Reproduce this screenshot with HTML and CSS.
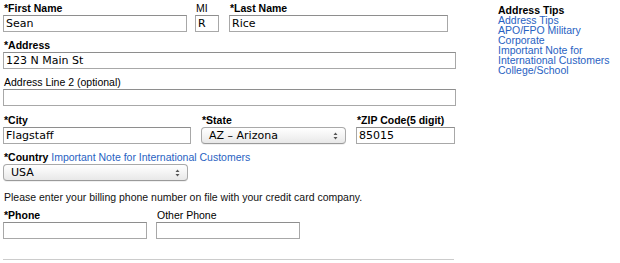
FILE: index.html
```html
<!DOCTYPE html>
<html>
<head>
<meta charset="utf-8">
<link rel="stylesheet" href="styles.css">
</head>
<body>
<div class="page">
  <form class="form">
    <div class="row">
      <div class="field">
        <label class="lbl req">*First Name</label>
        <input class="inp w-first" type="text" value="Sean">
      </div>
      <div class="field gap8">
        <label class="lbl">MI</label>
        <input class="inp w-mi" type="text" value="R">
      </div>
      <div class="field gap10">
        <label class="lbl req">*Last Name</label>
        <input class="inp w-last" type="text" value="Rice">
      </div>
    </div>

    <div class="row">
      <div class="field">
        <label class="lbl req">*Address</label>
        <input class="inp w-full" type="text" value="123 N Main St">
      </div>
    </div>

    <div class="row row-8">
      <div class="field">
        <label class="lbl">Address Line 2 (optional)</label>
        <input class="inp w-full" type="text" value="">
      </div>
    </div>

    <div class="row">
      <div class="field">
        <label class="lbl req">*City</label>
        <input class="inp w-city" type="text" value="Flagstaff">
      </div>
      <div class="field gap10">
        <label class="lbl req">*State</label>
        <div class="sel w-state">
          <span class="sel-text">AZ – Arizona</span>
          <svg class="sel-arrows" width="5" height="8" viewBox="0 0 5 8"><path d="M2.5 0.5 L4.5 3 L0.5 3 Z M0.5 5 L4.5 5 L2.5 7.5 Z" fill="#555"/></svg>
        </div>
      </div>
      <div class="field gap10">
        <label class="lbl req">*ZIP Code(5 digit)</label>
        <input class="inp w-zip" type="text" value="85015">
      </div>
    </div>

    <div class="row">
      <div class="field">
        <div class="lbl"><span class="req">*Country</span> <a class="link" href="#">Important Note for International Customers</a></div>
        <div class="sel w-country">
          <span class="sel-text">USA</span>
          <svg class="sel-arrows" width="5" height="8" viewBox="0 0 5 8"><path d="M2.5 0.5 L4.5 3 L0.5 3 Z M0.5 5 L4.5 5 L2.5 7.5 Z" fill="#555"/></svg>
        </div>
      </div>
    </div>

    <p class="note">Please enter your billing phone number on file with your credit card company.</p>

    <div class="row">
      <div class="field">
        <label class="lbl req">*Phone</label>
        <input class="inp w-phone" type="text" value="">
      </div>
      <div class="field gap9">
        <label class="lbl">Other Phone</label>
        <input class="inp w-phone" type="text" value="">
      </div>
    </div>

    <div class="rule"></div>
  </form>

  <aside class="tips">
    <div class="tips-title">Address Tips</div>
    <a class="link" href="#">Address Tips</a>
    <a class="link" href="#">APO/FPO Military</a>
    <a class="link" href="#">Corporate</a>
    <a class="link" href="#">Important Note for<br>International Customers</a>
    <a class="link" href="#">College/School</a>
  </aside>
</div>
</body>
</html>
```

FILE: styles.css
```css
html, body {
  margin: 0;
  padding: 0;
  background: #fff;
}

body {
  font-family: "Liberation Sans", Arial, Helvetica, sans-serif;
  font-size: 10.5px;
  color: #000;
}

.page {
  display: flex;
  align-items: flex-start;
  padding: 2px 0 0 3px;
}

.form {
  width: 453px;
  margin: 0;
  display: flex;
  flex-direction: column;
}

.row {
  display: flex;
  margin-bottom: 7px;
}

.row-8 {
  margin-bottom: 8px;
}

.field {
  display: flex;
  flex-direction: column;
}

.gap8 { margin-left: 8px; }
.gap9 { margin-left: 9px; }
.gap10 { margin-left: 10px; }

.lbl {
  display: block;
  height: 12px;
  line-height: 12px;
  margin: 0 0 1px 1px;
  white-space: nowrap;
}

.req {
  font-weight: bold;
}

.link {
  color: #2862c2;
  text-decoration: none;
  font-weight: normal;
}

.inp {
  box-sizing: border-box;
  height: 17px;
  margin: 0;
  padding: 0 2px;
  border: 1px solid #a8a8a8;
  border-top-color: #8e8e8e;
  border-radius: 0;
  background: #fff;
  font-family: "DejaVu Sans", "Liberation Sans", sans-serif;
  font-size: 11px;
  line-height: 15px;
  color: #000;
  outline: none;
}

.w-first { width: 184px; }
.w-mi { width: 24px; }
.w-last { width: 219px; }
.w-full { width: 453px; }
.w-city { width: 188px; }
.w-zip { width: 99px; }
.w-phone { width: 144px; }

.sel {
  position: relative;
  box-sizing: border-box;
  height: 17px;
  border: 1px solid #a9a9a9;
  border-bottom-color: #9a9a9a;
  border-radius: 4px;
  background: linear-gradient(#ffffff, #f4f4f4 50%, #e8e8e8);
  display: flex;
  align-items: center;
  padding-left: 7px;
  box-shadow: 0 1px 0 rgba(0,0,0,0.06);
}

.w-state { width: 145px; }
.w-country { width: 185px; }

.sel-text {
  font-family: "DejaVu Sans", "Liberation Sans", sans-serif;
  font-size: 11px;
  line-height: 15px;
  color: #000;
}

.sel-arrows {
  position: absolute;
  right: 7px;
  top: 4px;
}

.note {
  margin: 3px 0 6px 1px;
  height: 12px;
  line-height: 12px;
  color: #111;
}

.rule {
  height: 1px;
  background: #cccccc;
  margin-top: 13px;
  width: 451px;
}

.tips {
  margin-left: 42px;
  display: flex;
  flex-direction: column;
  line-height: 10px;
  padding-top: 3px;
}

.tips-title {
  font-weight: bold;
}
```
